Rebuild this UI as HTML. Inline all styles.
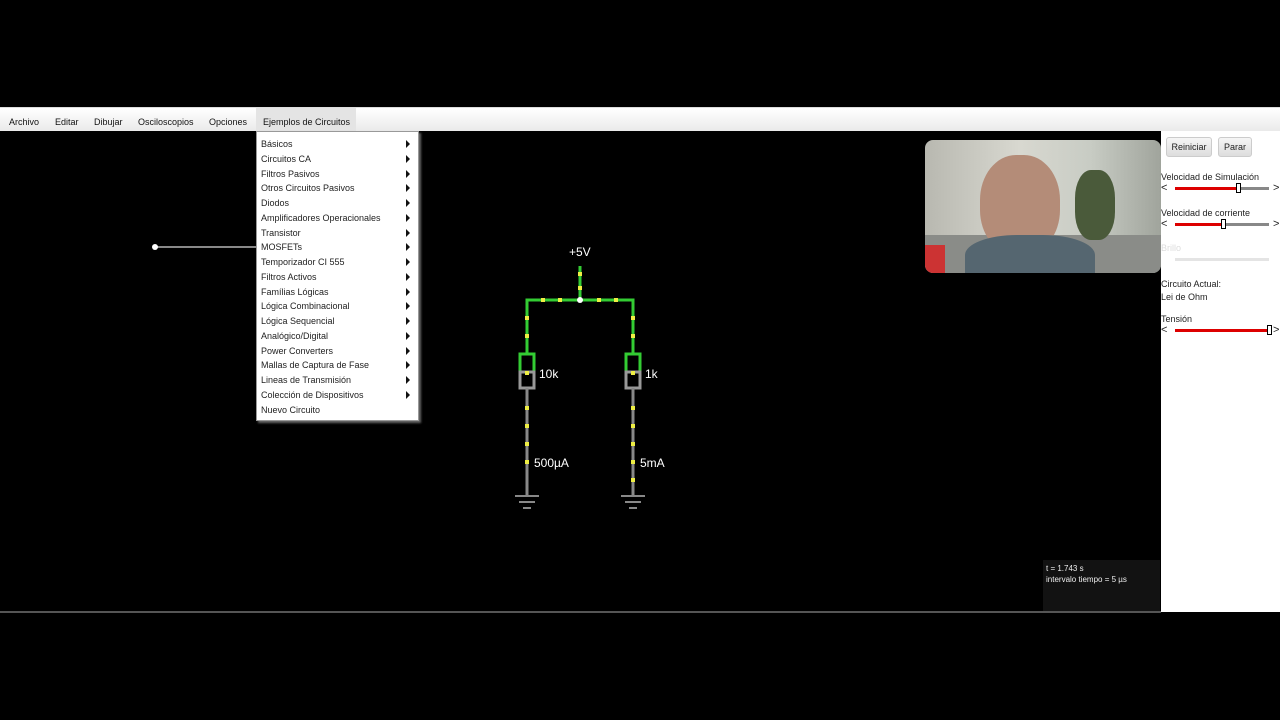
<!DOCTYPE html>
<html><head><meta charset="utf-8"><style>
*{margin:0;padding:0;box-sizing:border-box}
body{width:1280px;height:720px;background:#000;position:relative;overflow:hidden;font-family:"Liberation Sans",Arial,sans-serif}
.menubar{position:absolute;top:107px;left:0;width:1280px;height:24px;background:linear-gradient(#fff,#eaeaea);border-top:1px solid #ddd}
.menubar span{position:absolute;top:9px;font-size:9px;color:#111}
.menu{position:absolute;left:256px;top:131px;width:163px;height:290px;background:#fff;border:1px solid #999;box-shadow:2px 2px 2px #666}
.menu div{position:absolute;left:4px;font-size:9px;color:#222}
.menu i{position:absolute;left:149px;width:0;height:0;border-left:4px solid #111;border-top:4px solid transparent;border-bottom:4px solid transparent}
.panel{position:absolute;left:1161px;top:131px;width:119px;height:481px;background:#fff}
.btn{position:absolute;top:137px;height:20px;border:1px solid #ccc;border-radius:3px;background:linear-gradient(#f6f6f6,#ddd);font-size:9px;color:#222;text-align:center;line-height:18px}
.lbl{position:absolute;left:1161px;font-size:9px;color:#222}
.sl{position:absolute;left:1175px;height:3px;width:94px;background:#888}
.sl b{position:absolute;left:0;top:0;height:3px;background:#d00}
.sl u{position:absolute;top:-4px;width:5px;height:10px;border:1.5px solid #000;background:#fff}
.arr{position:absolute;font-size:11px;color:#222}
.info{position:absolute;left:1043px;top:560px;width:117px;height:51px;background:#121212;color:#eee;font-size:8px;padding:3px;line-height:11px}
</style></head><body>
<div class="menubar">
<span style="left:9px">Archivo</span><span style="left:55px">Editar</span><span style="left:94px">Dibujar</span><span style="left:138px">Osciloscopios</span><span style="left:209px">Opciones</span>
<span style="left:256px;top:0;height:23px;width:100px;background:#e4e4e4"></span><span style="left:263px">Ejemplos de Circuitos</span>
</div>
<svg width="1280" height="720" style="position:absolute;left:0;top:0">
<line x1="0" y1="612" x2="1161" y2="612" stroke="#aaa" stroke-width="1"/>
<line x1="155" y1="247" x2="256" y2="247" stroke="#888" stroke-width="2"/>
<circle cx="155" cy="247" r="3" fill="#fff"/>
<g stroke="#3c3" stroke-width="3" fill="none">
<path d="M580 266V300M527 355V300H633V355"/>
<rect x="520" y="354" width="14" height="34"/><rect x="626" y="354" width="14" height="34"/>
</g>
<rect x="520" y="372" width="14" height="16" fill="none" stroke="#999" stroke-width="3"/>
<rect x="626" y="372" width="14" height="16" fill="none" stroke="#999" stroke-width="3"/>
<path d="M527 388V496M633 388V496" stroke="#888" stroke-width="3"/>
<path d="M515 496h24M519 502h16M523 508h8M621 496h24M625 502h16M629 508h8" stroke="#888" stroke-width="2"/>
<circle cx="580" cy="300" r="3" fill="#fff"/>
<g fill="#ee4">
<rect x="578" y="272" width="4" height="4"/><rect x="578" y="286" width="4" height="4"/>
<rect x="541" y="298" width="4" height="4"/><rect x="558" y="298" width="4" height="4"/><rect x="597" y="298" width="4" height="4"/><rect x="614" y="298" width="4" height="4"/>
<rect x="525" y="316" width="4" height="4"/><rect x="525" y="334" width="4" height="4"/><rect x="631" y="316" width="4" height="4"/><rect x="631" y="334" width="4" height="4"/>
<rect x="525" y="371" width="4" height="4"/><rect x="631" y="371" width="4" height="4"/>
<rect x="525" y="406" width="4" height="4"/><rect x="525" y="424" width="4" height="4"/><rect x="525" y="442" width="4" height="4"/><rect x="525" y="460" width="4" height="4"/>
<rect x="631" y="406" width="4" height="4"/><rect x="631" y="424" width="4" height="4"/><rect x="631" y="442" width="4" height="4"/><rect x="631" y="460" width="4" height="4"/><rect x="631" y="478" width="4" height="4"/>
</g>
<g fill="#fff" font-family="Liberation Sans" font-size="12">
<text x="569" y="256">+5V</text><text x="539" y="378">10k</text><text x="645" y="378">1k</text><text x="534" y="467">500µA</text><text x="640" y="467">5mA</text>
</g>
</svg>
<div class="menu">
<div style="top:7px">Básicos</div><i style="top:8px"></i>
<div style="top:22px">Circuitos CA</div><i style="top:23px"></i>
<div style="top:37px">Filtros Pasivos</div><i style="top:38px"></i>
<div style="top:51px">Otros Circuitos Pasivos</div><i style="top:52px"></i>
<div style="top:66px">Diodos</div><i style="top:67px"></i>
<div style="top:81px">Amplificadores Operacionales</div><i style="top:82px"></i>
<div style="top:96px">Transistor</div><i style="top:97px"></i>
<div style="top:110px">MOSFETs</div><i style="top:111px"></i>
<div style="top:125px">Temporizador CI 555</div><i style="top:126px"></i>
<div style="top:140px">Filtros Activos</div><i style="top:141px"></i>
<div style="top:155px">Famílias Lógicas</div><i style="top:156px"></i>
<div style="top:169px">Lógica Combinacional</div><i style="top:170px"></i>
<div style="top:184px">Lógica Sequencial</div><i style="top:185px"></i>
<div style="top:199px">Analógico/Digital</div><i style="top:200px"></i>
<div style="top:214px">Power Converters</div><i style="top:215px"></i>
<div style="top:228px">Mallas de Captura de Fase</div><i style="top:229px"></i>
<div style="top:243px">Lineas de Transmisión</div><i style="top:244px"></i>
<div style="top:258px">Colección de Dispositivos</div><i style="top:259px"></i>
<div style="top:273px">Nuevo Circuito</div>
</div>
<div class="panel"></div>
<div style="position:absolute;left:925px;top:140px;width:236px;height:133px;border-radius:8px;overflow:hidden;background:linear-gradient(90deg,#b8b8b0 0%,#d8d8d0 40%,#c8ccc4 70%,#a0a49c 100%)">
<div style="position:absolute;left:0;top:95px;width:236px;height:38px;background:#8a8c88"></div>
<div style="position:absolute;left:150px;top:30px;width:40px;height:70px;background:#4a5a3a;border-radius:40%"></div>
<div style="position:absolute;left:55px;top:15px;width:80px;height:100px;background:#b48c78;border-radius:45%"></div>
<div style="position:absolute;left:40px;top:95px;width:130px;height:50px;background:#556670;border-radius:40% 40% 0 0"></div>
<div style="position:absolute;left:0;top:105px;width:20px;height:28px;background:#c33"></div>
</div>
<div class="btn" style="left:1166px;width:46px">Reiniciar</div>
<div class="btn" style="left:1218px;width:34px">Parar</div>
<div class="lbl" style="top:172px">Velocidad de Simulación</div>
<div class="arr" style="left:1161px;top:182px">&lt;</div><div class="arr" style="left:1273px;top:182px">&gt;</div>
<div class="sl" style="top:187px"><b style="width:63px"></b><u style="left:61px"></u></div>
<div class="lbl" style="top:208px">Velocidad de corriente</div>
<div class="arr" style="left:1161px;top:218px">&lt;</div><div class="arr" style="left:1273px;top:218px">&gt;</div>
<div class="sl" style="top:223px"><b style="width:48px"></b><u style="left:46px"></u></div>
<div class="lbl" style="top:243px;color:#ddd">Brillo</div>
<div class="sl" style="top:258px;background:#e4e4e4"></div>
<div class="lbl" style="top:279px">Circuito Actual:</div>
<div class="lbl" style="top:292px">Lei de Ohm</div>
<div class="lbl" style="top:314px">Tensión</div>
<div class="arr" style="left:1161px;top:324px">&lt;</div><div class="arr" style="left:1273px;top:324px">&gt;</div>
<div class="sl" style="top:329px"><b style="width:94px"></b><u style="left:92px"></u></div>
<div class="info">t = 1.743 s<br>intervalo tiempo = 5 µs</div>
</body></html>
